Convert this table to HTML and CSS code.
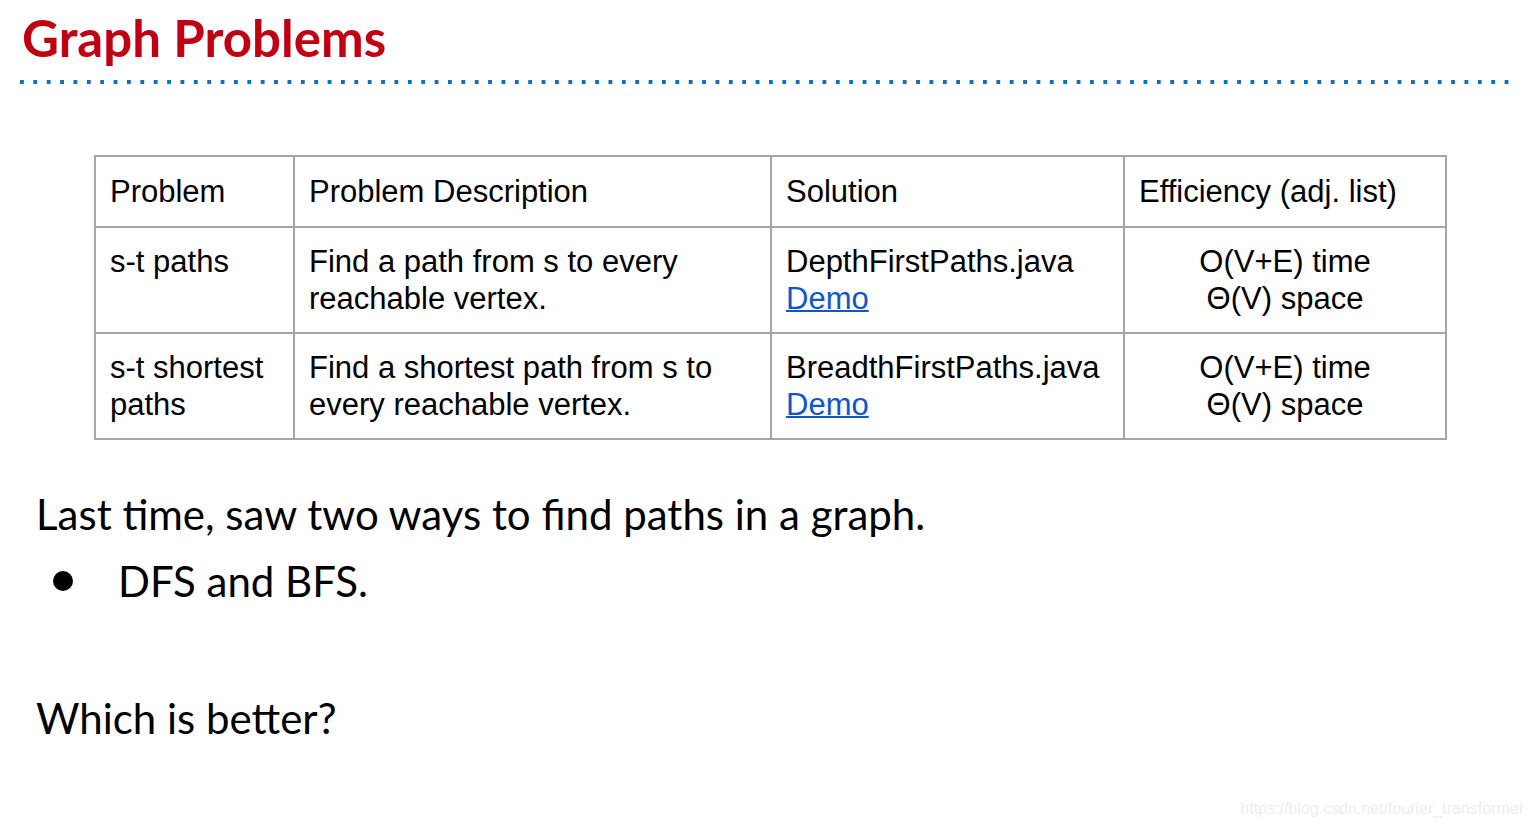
FILE: index.html
```html
<!DOCTYPE html>
<html>
<head>
<meta charset="utf-8">
<link rel="stylesheet" href="styles.css">
</head>
<body>
<div class="slide">
  <header class="head">
    <h1 class="title">Graph Problems</h1>
    <div class="dots"></div>
  </header>
  <table class="grid">
    <colgroup>
      <col class="c1"><col class="c2"><col class="c3"><col class="c4">
    </colgroup>
    <tr class="hrow">
      <td>Problem</td>
      <td>Problem Description</td>
      <td>Solution</td>
      <td>Efficiency (adj. list)</td>
    </tr>
    <tr>
      <td>s-t paths</td>
      <td>Find a path from s to every<br>reachable vertex.</td>
      <td>DepthFirstPaths.java<br><a class="link" href="#">Demo</a></td>
      <td class="center">O(V+E) time<br>Θ(V) space</td>
    </tr>
    <tr>
      <td>s-t shortest<br>paths</td>
      <td>Find a shortest path from s to<br>every reachable vertex.</td>
      <td>BreadthFirstPaths.java<br><a class="link" href="#">Demo</a></td>
      <td class="center">O(V+E) time<br>Θ(V) space</td>
    </tr>
  </table>
  <div class="body">
    <p class="line">Last time, saw two ways to find paths in a graph.</p>
    <div class="bullet"><span class="dot"></span><span>DFS and BFS.</span></div>
    <p class="line q">Which is better?</p>
  </div>
  <div class="mark">https://blog.csdn.net/fourier_transformer</div>
</div>
</body>
</html>
```
FILE: styles.css
```css
html, body {
  margin: 0;
  padding: 0;
  background: #ffffff;
}
.slide {
  width: 1534px;
  height: 826px;
  position: relative;
  overflow: hidden;
  font-family: "Lato", "Open Sans", sans-serif;
  color: #000;
}
.head {
  padding: 8px 0 0 22px;
}
.title {
  margin: 0;
  font-family: "Lato", sans-serif;
  font-weight: 700;
  font-size: 51px;
  line-height: 60px;
  color: #c00012;
}
.dots {
  margin: 12px 0 0 -2px;
  width: 1491px;
  height: 4px;
  background-image: linear-gradient(to right, #1070c0 0, #1070c0 4px, transparent 4px);
  background-size: 13.39px 4px;
  background-repeat: repeat-x;
}
.grid {
  margin: 71px 0 0 94px;
  border-collapse: collapse;
  table-layout: fixed;
  width: 1351px;
  font-family: "Liberation Sans", Arial, sans-serif;
  font-size: 31px;
  line-height: 37px;
}
.c1 { width: 199px; }
.c2 { width: 477px; }
.c3 { width: 353px; }
.c4 { width: 322px; }
.grid td {
  border: 2px solid #a6a6a6;
  padding: 15px 14px 15px;
  vertical-align: top;
  white-space: nowrap;
}
.grid .hrow td {
  padding: 16px 14px 16px;
}
.grid td.center {
  text-align: center;
}
.link {
  color: #1155cc;
  text-decoration: underline;
  text-decoration-thickness: 2px;
}
.body {
  padding: 43px 0 0 36px;
  font-size: 42px;
}
.line {
  margin: 0;
  line-height: 62px;
}
.bullet {
  display: flex;
  align-items: center;
  height: 72px;
}
.dot {
  width: 20px;
  height: 20px;
  border-radius: 50%;
  background: #000;
  margin: 0 45px 0 17px;
}
.q {
  margin-top: 70px;
}
.mark {
  position: absolute;
  right: 10px;
  bottom: 8px;
  font-family: "Liberation Sans", Arial, sans-serif;
  font-size: 16px;
  color: #ededed;
}
```
